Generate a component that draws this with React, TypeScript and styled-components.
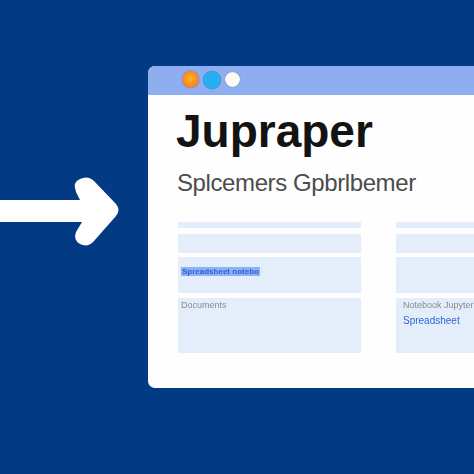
import React from 'react'
import styled, { createGlobalStyle } from 'styled-components'

const GlobalStyle = createGlobalStyle`
    html, body {
        margin: 0;
        padding: 0;
        background: #023a84;
        overflow: hidden;
    }
`

const Page = styled.div`
    width: 474px;
    height: 474px;
    background: #023a84;
    display: flex;
    overflow: hidden;
    font-family: "Liberation Sans", Arial, sans-serif;
`

const ArrowColumn = styled.div`
    flex: 0 0 148px;
    padding-top: 170px;
    box-sizing: border-box;
`

const Window = styled.div`
    flex: 0 0 326px;
    height: 322px;
    margin-top: 66px;
    background: #fefefe;
    border-radius: 7px 0 0 7px;
    overflow: hidden;
    display: flex;
    flex-direction: column;
`

const TitleBar = styled.div`
    height: 29px;
    flex: none;
    background: #8eaef0;
    display: flex;
    align-items: center;
    gap: 4px;
    padding: 0 0 2px 34px;
    box-sizing: border-box;
`

const Dot = styled.span<{ $bg: string; $size: number }>`
    width: ${p => p.$size}px;
    height: ${p => p.$size}px;
    border-radius: 50%;
    background: ${p => p.$bg};
    box-shadow: 0 0 1px rgba(30, 50, 110, 0.7);
`

const Body = styled.div`
    flex: 1;
    padding: 11px 0 0 28px;
    overflow: hidden;
`

const Title = styled.h1`
    margin: 0;
    font-size: 46px;
    line-height: 50px;
    font-weight: 700;
    color: #131313;
    letter-spacing: 0;
`

const Subtitle = styled.div`
    margin: 14px 0 0 1px;
    font-size: 24px;
    line-height: 26px;
    color: #4c4c4c;
    letter-spacing: -0.4px;
    white-space: nowrap;
`

const Columns = styled.div`
    display: flex;
    gap: 35px;
    margin: 26px 0 0 2px;
`

const Column = styled.div<{ $width: number }>`
    flex: 0 0 ${p => p.$width}px;
    display: flex;
    flex-direction: column;
`

const Row = styled.div<{ $height: number; $gap: number; $inset: number }>`
    height: ${p => p.$height}px;
    margin-bottom: ${p => p.$gap}px;
    background: #e4eefb;
    padding: 3px 0 0 ${p => p.$inset}px;
    box-sizing: border-box;
    overflow: hidden;
`

const Tiny = styled.div<{ $color: string; $size: number }>`
    font-size: ${p => p.$size}px;
    line-height: 9px;
    color: ${p => p.$color};
    white-space: nowrap;
    filter: blur(0.4px);
`

const BlueTiny = styled(Tiny)`
    background: #8fb1f2;
    display: inline-block;
    padding: 0 1px;
    font-weight: 700;
`

const LinkTiny = styled(Tiny)`
    margin-top: 6px;
`

const Arrow = () => (
    <svg width="130" height="90" viewBox="0 170 130 90">
        <path
            d="M0 200 L80 200 L76 192 Q72 182 80 179 Q88 175 94 181 L116 204 Q121 210 116 216 L94 241 Q88 248 80 244 Q73 240 76 232 L82 222 L0 222 Z"
            fill="#fff"
        />
    </svg>
)

const columns = [
    { width: 183, inset: 3, rows: [
        { height: 6, gap: 6 },
        { height: 19, gap: 4 },
        { height: 36, gap: 5, blue: 'Spreadsheet notebo' },
        { height: 55, gap: 0, grey: 'Documents' },
    ] },
    { width: 100, inset: 7, rows: [
        { height: 6, gap: 6 },
        { height: 19, gap: 4 },
        { height: 36, gap: 5 },
        { height: 55, gap: 0, grey: 'Notebook Jupyter', link: 'Spreadsheet' },
    ] },
]

export default function App() {
    return (
        <Page>
            <GlobalStyle />
            <ArrowColumn>
                <Arrow />
            </ArrowColumn>
            <Window>
                <TitleBar>
                    <Dot $bg="radial-gradient(circle at 50% 45%, #fbb321, #ee6c2c)" $size={17} />
                    <Dot $bg="#27aef0" $size={18} />
                    <Dot $bg="#fbfbf7" $size={15} />
                </TitleBar>
                <Body>
                    <Title>Jupraper</Title>
                    <Subtitle>Splcemers Gpbrlbemer</Subtitle>
                    <Columns>
                        {columns.map((col, i) => (
                            <Column key={i} $width={col.width}>
                                {col.rows.map((row: any, j) => (
                                    <Row key={j} $height={row.height} $gap={row.gap} $inset={col.inset}>
                                        {row.blue && <BlueTiny $color="#2e5fd8" $size={8}>{row.blue}</BlueTiny>}
                                        {row.grey && <Tiny $color="#8a8a8a" $size={9}>{row.grey}</Tiny>}
                                        {row.link && <LinkTiny $color="#2f66dc" $size={10}>{row.link}</LinkTiny>}
                                    </Row>
                                ))}
                            </Column>
                        ))}
                    </Columns>
                </Body>
            </Window>
        </Page>
    )
}
